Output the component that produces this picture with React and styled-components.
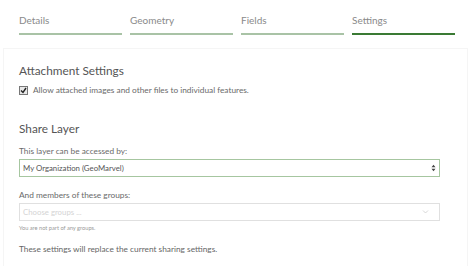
import React from 'react'
import styled, { createGlobalStyle } from 'styled-components'

const GlobalStyle = createGlobalStyle`
  body {
    margin: 0;
    background: #fff;
    font-family: Lato, "Open Sans", sans-serif;
    color: #595959;
  }
`

const Page = styled.div`
  width: 474px;
  height: 266px;
  overflow: hidden;
  background: #fff;
`

const Tabs = styled.div`
  display: grid;
  grid-template-columns: repeat(4, 103px);
  gap: 8px;
  padding: 14px 0 0 19px;
`

const Tab = styled.div`
  font-size: 10px;
  color: #8a8a8a;
  padding-bottom: 7px;
  border-bottom: 2px solid ${p => (p.active ? '#3a7a34' : '#a9c3a6')};
`

const Panel = styled.div`
  margin: 13px 6px 0 3px;
  border: 1px solid #f5f5f5;
  border-bottom: none;
  padding: 14px 0 0 15px;
  height: 240px;
`

const Heading = styled.h3`
  margin: 0;
  font-weight: 400;
  font-size: 11.8px;
  color: #555;
  line-height: 16px;
`

const CheckRow = styled.label`
  display: flex;
  align-items: center;
  gap: 5px;
  margin-top: 6px;
  font-size: 8.3px;
  color: #6a6a6a;
`

const Box = styled.span`
  width: 7px;
  height: 7px;
  border: 1px solid #777;
  background: #e8e8e8;
  display: flex;
  align-items: center;
  justify-content: center;
`

const Section = styled.div`
  margin-top: ${p => p.top}px;
`

const Label = styled.div`
  font-size: 8.3px;
  color: #6a6a6a;
  line-height: 10px;
`

const Select = styled.div`
  width: 421px;
  height: 18px;
  box-sizing: border-box;
  margin-top: 3px;
  border: 1px solid ${p => (p.muted ? '#e0e0e0' : '#a6c6a0')};
  display: flex;
  align-items: center;
  justify-content: space-between;
  padding: 0 3px 0 3px;
  font-size: 7.8px;
  color: ${p => (p.muted ? '#d4d4d4' : '#555')};
`

const Note = styled.div`
  font-size: 5.7px;
  color: #999;
  margin-top: 3px;
`

const Footer = styled.div`
  font-size: 8.3px;
  color: #666;
  margin-top: 13px;
`

export default function App() {
  return (
    <Page>
      <GlobalStyle />
      <Tabs>
        <Tab>Details</Tab>
        <Tab>Geometry</Tab>
        <Tab>Fields</Tab>
        <Tab active>Settings</Tab>
      </Tabs>
      <Panel>
        <Heading>Attachment Settings</Heading>
        <CheckRow>
          <Box>
            <svg width="7" height="7" viewBox="0 0 7 7">
              <path d="M1 3.5 L3 5.5 L6 1" stroke="#222" strokeWidth="1.4" fill="none" />
            </svg>
          </Box>
          Allow attached images and other files to individual features.
        </CheckRow>
        <Section top={26}>
          <Heading>Share Layer</Heading>
          <Section top={9}>
            <Label>This layer can be accessed by:</Label>
            <Select>
              My Organization (GeoMarvel)
              <svg width="5" height="8" viewBox="0 0 5 8">
                <path d="M0.5 3.2 L2.5 0.8 L4.5 3.2 Z M0.5 4.8 L2.5 7.2 L4.5 4.8 Z" fill="#444" />
              </svg>
            </Select>
          </Section>
          <Section top={13}>
            <Label>And members of these groups:</Label>
            <Select muted>
              Choose groups ...
              <svg width="14" height="8" viewBox="0 0 14 8">
                <path d="M1 2.5 L3.5 5 L6 2.5" stroke="#ccc" strokeWidth="0.8" fill="none" />
              </svg>
            </Select>
            <Note>You are not part of any groups.</Note>
          </Section>
          <Footer>These settings will replace the current sharing settings.</Footer>
        </Section>
      </Panel>
    </Page>
  )
}
